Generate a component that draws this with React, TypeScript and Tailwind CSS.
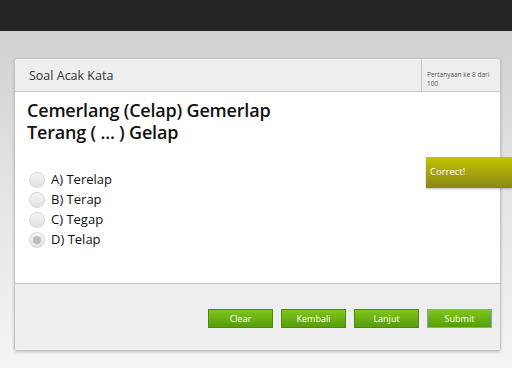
import React from 'react';

const options = [
  { label: 'A) Terelap', checked: false },
  { label: 'B) Terap', checked: false },
  { label: 'C) Tegap', checked: false },
  { label: 'D) Telap', checked: true },
];

const buttons = ['Clear', 'Kembali', 'Lanjut', 'Submit'];

export default function App() {
  return (
    <div
      className="w-[512px] h-[368px] relative overflow-hidden bg-gradient-to-b from-[#cdcdcd] via-[#e4e4e4] to-[#f4f4f4]"
      style={{ fontFamily: '"Open Sans", "Noto Sans", sans-serif' }}
    >
      {/* top bar */}
      <div className="h-[31px] bg-[#252525]" />

      <div className="pt-[27px] pl-[14px]">
        <div className="w-[487px] rounded-[3px] border border-[#c4c4c4] shadow-[0_1px_3px_rgba(0,0,0,0.2)] overflow-hidden">
          {/* header */}
          <div className="h-[33px] flex bg-[#eeeeee] border-b border-[#c8c8c8]">
            <div className="flex-1 flex items-center pl-[14px] pt-[3px] text-[12.5px] text-[#333]">Soal Acak Kata</div>
            <div className="w-[79px] border-l border-[#c8c8c8] pl-[5px] pt-[11px]">
              <div className="w-[66px] text-[6.5px] leading-[9px] text-[#555]">Pertanyaan ke 8 dari 100</div>
            </div>
          </div>

          {/* body */}
          <div className="h-[191px] bg-white pl-[12px] pt-[7px]">
            <div className="text-[18px] leading-[22px] font-semibold text-[#111] tracking-[-0.2px]">
              Cemerlang (Celap) Gemerlap
              <br />
              Terang ( ... ) Gelap
            </div>
            <div className="mt-[27px] flex flex-col">
              {options.map((o) => (
                <div key={o.label} className="h-[20px] flex items-center">
                  <span className="w-[16px] h-[16px] rounded-full border border-[#d8d8d8] bg-gradient-to-b from-[#f4f4f4] to-[#e2e2e2] flex items-center justify-center ml-[2px]">
                    {o.checked && <span className="w-[8px] h-[8px] rounded-full bg-[#bdbdbd]" />}
                  </span>
                  <span className="ml-[6px] text-[13px] text-[#111]">{o.label}</span>
                </div>
              ))}
            </div>
          </div>

          {/* footer */}
          <div className="h-[67px] bg-[#eeeeee] border-t border-[#bdbdbd] flex items-start justify-end pt-[25px] pr-[8px] gap-[8px]">
            {buttons.map((b) => (
              <button
                key={b}
                className={`w-[65px] h-[19px] text-[9px] text-white bg-gradient-to-b from-[#80c51c] to-[#559e0a] border ${
                  b === 'Submit' ? 'border-[#7c9fe0]' : 'border-[#4b8a0a]'
                }`}
              >
                {b}
              </button>
            ))}
          </div>
        </div>
      </div>

      {/* correct tag */}
      <div className="absolute left-[426px] top-[157px] w-[86px] h-[31px] bg-gradient-to-b from-[#c3c500] to-[#8b8612] flex items-center pl-[4px] text-[9.5px] text-white shadow-[0_1px_2px_rgba(0,0,0,0.25)]">
        Correct!
      </div>
    </div>
  );
}
